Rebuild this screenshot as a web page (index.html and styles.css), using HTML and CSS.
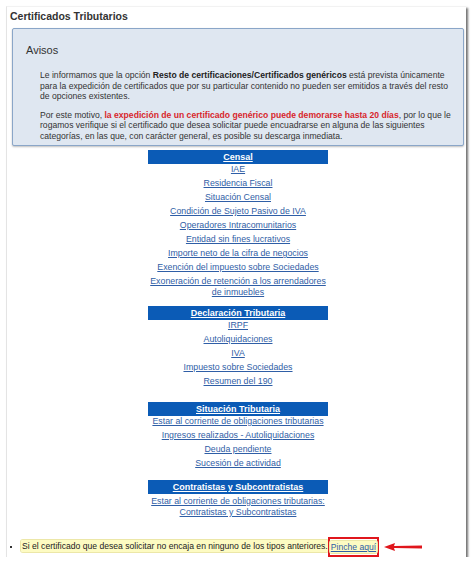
FILE: index.html
```html
<!DOCTYPE html>
<html lang="es">
<head>
<meta charset="utf-8">
<title>Certificados Tributarios</title>
<link rel="stylesheet" href="styles.css">
</head>
<body>
<div class="page">
  <h1 class="title">Certificados Tributarios</h1>
  <div class="avisos">
    <h2 class="avisos-title">Avisos</h2>
    <p class="para">Le informamos que la opción <b>Resto de certificaciones/Certificados genéricos</b> está prevista únicamente para la expedición de certificados que por su particular contenido no pueden ser emitidos a través del resto de opciones existentes.</p>
    <p class="para">Por este motivo, <b class="red">la expedición de un certificado genérico puede demorarse hasta 20 días</b>, por lo que le rogamos verifique si el certificado que desea solicitar puede encuadrarse en alguna de las siguientes categorías, en las que, con carácter general, es posible su descarga inmediata.</p>
  </div>

  <div class="groups">
    <div class="group g1">
      <div class="head"><a href="#">Censal</a></div>
      <a class="item" href="#">IAE</a>
      <a class="item" href="#">Residencia Fiscal</a>
      <a class="item" href="#">Situación Censal</a>
      <a class="item" href="#">Condición de Sujeto Pasivo de IVA</a>
      <a class="item" href="#">Operadores Intracomunitarios</a>
      <a class="item" href="#">Entidad sin fines lucrativos</a>
      <a class="item" href="#">Importe neto de la cifra de negocios</a>
      <a class="item" href="#">Exención del impuesto sobre Sociedades</a>
      <a class="item" href="#">Exoneración de retención a los arrendadores<br>de inmuebles</a>
    </div>
    <div class="group g2">
      <div class="head"><a href="#">Declaración Tributaria</a></div>
      <a class="item" href="#">IRPF</a>
      <a class="item" href="#">Autoliquidaciones</a>
      <a class="item" href="#">IVA</a>
      <a class="item" href="#">Impuesto sobre Sociedades</a>
      <a class="item" href="#">Resumen del 190</a>
    </div>
    <div class="group g3">
      <div class="head"><a href="#">Situación Tributaria</a></div>
      <a class="item" href="#">Estar al corriente de obligaciones tributarias</a>
      <a class="item" href="#">Ingresos realizados - Autoliquidaciones</a>
      <a class="item" href="#">Deuda pendiente</a>
      <a class="item" href="#">Sucesión de actividad</a>
    </div>
    <div class="group g4">
      <div class="head"><a href="#">Contratistas y Subcontratistas</a></div>
      <a class="item first" href="#">Estar al corriente de obligaciones tributarias:<br>Contratistas y Subcontratistas</a>
    </div>
  </div>

  <ul class="bottom">
    <li><span class="hl">Si el certificado que desea solicitar no encaja en ninguno de los tipos anteriores.</span><a class="pinche" href="#"><span class="hl2">Pinche aquí</span></a><svg class="arrow" width="42" height="10" viewBox="0 0 42 10"><path d="M2 5 L13 1 L12 4 L40 3.6 L40 6.4 L12 6 L13 9 Z" fill="#e0161c"/></svg></li>
  </ul>
</div>
</body>
</html>
```
FILE: styles.css
```css
html, body {
  margin: 0;
  padding: 0;
  background: #ffffff;
}
body {
  font-family: "Liberation Sans", Arial, sans-serif;
  color: #333;
}
.page {
  margin: 6px 0 0 6px;
  width: 460px;
  height: 551px;
  background: #fff;
  border-left: 1px solid #e4e4e4;
  border-top: 1px solid #f2f2f2;
  box-shadow: 2px 2px 2px rgba(0,0,0,0.55);
  box-sizing: border-box;
  padding: 0 2px 0 5px;
}
.title {
  margin: 0 0 0 -2px;
  padding: 3px 0 0 0;
  font-size: 10.5px;
  line-height: 13px;
  font-weight: bold;
  color: #333;
}
.avisos {
  margin-top: 5px;
  height: 118px;
  box-sizing: border-box;
  background: #dfe7f1;
  border: 1px solid #8aa6c8;
  border-radius: 2px;
  box-shadow: 0 1px 2px rgba(0,0,0,0.25);
  padding: 15px 9px 0 27px;
}
.avisos-title {
  margin: 0 0 0 -14px;
  font-size: 11px;
  line-height: 13px;
  font-weight: normal;
  color: #333;
}
.para {
  margin: 13px 0 0 0;
  font-size: 8.6px;
  line-height: 10.5px;
  color: #333;
}
.para + .para {
  margin-top: 8px;
}
.para b { color: #222; }
.para b.red { color: #d8262c; }

.groups {
  display: flex;
  flex-direction: column;
  align-items: center;
  margin-top: 4px;
}
.group {
  width: 180px;
  display: flex;
  flex-direction: column;
  align-items: center;
}
.g2 { margin-top: 5px; }
.g3 { margin-top: 12px; }
.g4 { margin-top: 8px; }
.head {
  width: 180px;
  height: 14px;
  background: #0b5bb6;
  text-align: center;
  font-size: 9px;
  font-weight: bold;
  line-height: 14px;
}
.head a {
  color: #fff;
  text-decoration: underline;
}
.item {
  display: block;
  white-space: nowrap;
  text-align: center;
  font-size: 8.8px;
  line-height: 11px;
  padding-bottom: 3px;
  color: #2f5ea6;
  text-decoration: underline;
}
.item.first { padding-top: 2px; }
.bottom {
  margin: 14px 0 0 0;
  padding: 0 0 0 9px;
  font-size: 8.6px;
  line-height: 22px;
  list-style: square;
}
.bottom li::marker {
  font-size: 7px;
  color: #333;
}
.hl, .hl2 {
  background: #fdfbc2;
  box-shadow: 0 0 0 1px #ece7a8;
  border-radius: 2px;
  padding: 1px 0 1px 1px;
  color: #222;
}
.hl2 { color: #2f5ea6; padding: 1px 1px; }
.pinche {
  display: inline-block;
  color: #2f5ea6;
  text-decoration: underline;
  border: 2px solid #e0161c;
  padding: 2px 0;
  line-height: 12px;
  margin-left: 0;
  vertical-align: middle;
}
.arrow {
  vertical-align: middle;
  margin-left: 3px;
}
```
